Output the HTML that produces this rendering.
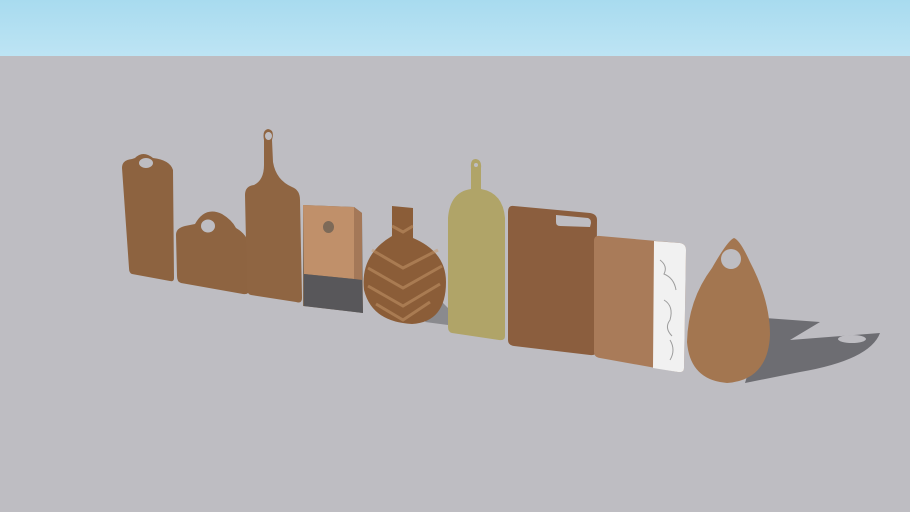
<!DOCTYPE html>
<html><head><meta charset="utf-8"><style>
html,body{margin:0;padding:0;width:910px;height:512px;overflow:hidden;background:#bebdc2}
svg{display:block}
</style></head><body>
<svg width="910" height="512" viewBox="0 0 910 512" xmlns="http://www.w3.org/2000/svg">
<defs>
<linearGradient id="sky" x1="0" y1="0" x2="0" y2="1"><stop offset="0" stop-color="#a8dbef"/><stop offset="1" stop-color="#bde4f4"/></linearGradient>
</defs>
<rect width="910" height="56" fill="url(#sky)"/>
<rect y="56" width="910" height="456" fill="#bebdc2"/>
<!-- shadows -->
<path d="M765 318 L820 322 L790 340 L880 333 Q870 360 800 372 L745 383 Z" fill="#6d6d72"/>
<ellipse cx="852" cy="339" rx="14" ry="4" fill="#bebdc2"/>
<path d="M440 300 L450 310 L448 325 L425 322 Z" fill="#8a8a8e"/>
<!-- board 1 -->
<path fill-rule="evenodd" d="M122 168 Q122 160 132 159 L135 158 Q143 150 153 158 Q170 160 173 170 L174 278 Q174 282 170 281 L132 274 Q129 273 129 268 Z M139 163 a7 5 0 1 0 14 0 a7 5 0 1 0 -14 0 Z" fill="#8d6340"/>
<!-- board 2 -->
<path fill-rule="evenodd" d="M176 235 Q176 228 185 226 L195 224 Q205 206 222 214 Q232 220 236 228 Q248 235 248 245 L249 290 Q249 295 243 294 L181 283 Q177 282 177 276 Z M201 226 a7 6.5 0 1 0 14 0 a7 6.5 0 1 0 -14 0 Z" fill="#8e6441"/>
<!-- board 3 -->
<path fill-rule="evenodd" d="M245 195 Q245 186 254 185 Q264 180 264 165 L264 140 Q262 130 268 129 Q275 130 272 140 L273 162 Q276 180 292 187 Q300 190 300 200 L302 298 Q302 304 296 302 L251 295 Q247 294 247 289 Z M265 136 a3.5 4 0 1 0 7 0 a3.5 4 0 1 0 -7 0 Z" fill="#8f6542"/>
<!-- board 4 -->
<path d="M303 205 L354 207 L362 213 L363 313 L355 312 L303 306 Z" fill="#7d6a58"/>
<path fill-rule="evenodd" d="M303 205 L354 207 L354 279 L304 274 Z M323 227 a5.5 6 0 1 0 11 0 a5.5 6 0 1 0 -11 0 Z" fill="#c0906a"/>
<path d="M354 207 L362 213 L362 280 L354 279 Z" fill="#a47858"/>
<path d="M304 274 L354 279 L362 280 L363 313 L355 312 L304 306 Z" fill="#58575a"/>
<!-- board 5 round -->
<path d="M392 206 L413 208 L413 238 Q446 252 446 282 Q446 322 412 324 Q372 322 364 290 Q360 255 392 236 Z" fill="#8b5d38"/>
<g stroke="#c89a6c" stroke-width="3" opacity="0.5" fill="none">
<path d="M372 250 L403 268 L438 250 M368 268 L403 288 L442 266 M368 286 L403 306 L440 284 M376 304 L403 320 L430 302 M392 226 L403 232 L413 226"/>
</g>
<!-- board 6 paddle -->
<path fill-rule="evenodd" d="M448 218 Q450 192 471 189 L471 168 Q470 159 476 159 Q482 160 481 168 L481 189 Q503 193 505 218 L505 336 Q505 341 499 340 L452 333 Q448 332 448 327 Z M474 165 a2 2 0 1 0 4 0 a2 2 0 1 0 -4 0 Z" fill="#b0a468"/>
<!-- board 7 -->
<path fill-rule="evenodd" d="M508 212 Q508 205 514 206 L590 213 Q597 214 597 220 L596 351 Q596 356 590 355 L514 346 Q508 345 508 340 Z M556 215 L588 218 Q591 219 591 223 L590 227 L560 226 Q556 226 556 222 Z" fill="#8b5e3e"/>
<!-- board 8 -->
<path d="M594 241 Q594 235 600 236 L680 243 Q686 244 686 250 L684 368 Q684 373 678 372 L600 358 Q594 357 594 352 Z" fill="#a97b59"/>
<path d="M654 241 L680 243 Q686 244 686 250 L684 368 Q684 373 678 372 L653 368 Z" fill="#f1f1f1"/>
<path d="M660 260 q8 6 4 14 q10 4 12 16 M664 300 q10 6 6 20 q-6 8 2 16 M670 340 q6 10 0 20" stroke="#666" stroke-width="1" fill="none" opacity="0.6"/>
<!-- board 9 teardrop -->
<path fill-rule="evenodd" d="M734 238 Q740 240 750 262 Q770 300 770 335 Q768 380 727 383 Q690 380 687 342 Q688 300 712 268 Q728 240 734 238 Z M721 259 a10 10 0 1 0 20 0 a10 10 0 1 0 -20 0 Z" fill="#a37650"/>
</svg>
</body></html>
